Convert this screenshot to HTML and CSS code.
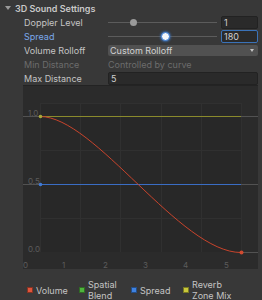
FILE: index.html
```html
<!DOCTYPE html>
<html>
<head>
<meta charset="utf-8">
<link rel="stylesheet" href="styles.css">
</head>
<body>
<div class="panel">
  <div class="header"><span class="fold"></span><span class="title">3D Sound Settings</span></div>
  <div class="row">
    <div class="label">Doppler Level</div>
    <div class="field slider-field">
      <div class="track"><span class="knob" style="left:25px"></span></div>
      <div class="num">1</div>
    </div>
  </div>
  <div class="row">
    <div class="label focus">Spread</div>
    <div class="field slider-field">
      <div class="track"><span class="knob active" style="left:56px"></span></div>
      <div class="num focused">180</div>
    </div>
  </div>
  <div class="row">
    <div class="label">Volume Rolloff</div>
    <div class="field"><div class="dropdown"><span>Custom Rolloff</span><span class="arrow"></span></div></div>
  </div>
  <div class="row">
    <div class="label disabled">Min Distance</div>
    <div class="field"><span class="disabled">Controlled by curve</span></div>
  </div>
  <div class="row">
    <div class="label">Max Distance</div>
    <div class="field"><div class="text-input">5</div></div>
  </div>
  <div class="graph">
    <svg width="235" height="184" viewBox="0 0 235 184">
      <rect x="0" y="0" width="235" height="184" fill="#2b2b2b"/>
      <rect x="0" y="0" width="235" height="1" fill="#232323"/>
      <rect x="17" y="18" width="201" height="149" fill="#282828"/>
      <g stroke="#303030" stroke-width="1">
        <line x1="17.5" y1="18" x2="17.5" y2="167"/>
        <line x1="57.5" y1="18" x2="57.5" y2="167"/>
        <line x1="97.5" y1="18" x2="97.5" y2="167"/>
        <line x1="138.5" y1="18" x2="138.5" y2="167"/>
        <line x1="178.5" y1="18" x2="178.5" y2="167"/>
        <line x1="218.5" y1="18" x2="218.5" y2="167"/>
        <line x1="17" y1="18.5" x2="218" y2="18.5"/>
        <line x1="17" y1="65.5" x2="218" y2="65.5"/>
        <line x1="17" y1="133.5" x2="218" y2="133.5"/>
      </g>
      <g stroke="#525252" stroke-width="1">
        <line x1="0" y1="31.5" x2="17" y2="31.5"/>
        <line x1="218" y1="31.5" x2="235" y2="31.5"/>
        <line x1="0" y1="99.5" x2="17" y2="99.5"/>
        <line x1="218" y1="99.5" x2="235" y2="99.5"/>
        <line x1="218" y1="167.5" x2="235" y2="167.5"/>
      </g>
      <line x1="17" y1="31.5" x2="218" y2="31.5" stroke="#8a8a2c" stroke-width="1"/>
      <line x1="17" y1="99.5" x2="218" y2="99.5" stroke="#3a6dc4" stroke-width="1"/>
      <path d="M17 31.5 C72 31.5 157 167.5 218 167.5" fill="none" stroke="#c8442c" stroke-width="1"/>
      <circle cx="17.5" cy="31.5" r="1.8" fill="#a8a83a"/>
      <circle cx="17.5" cy="99.5" r="1.8" fill="#3f7ad6"/>
      <circle cx="218.5" cy="167.5" r="2" fill="#d04a30"/>
      <g class="axis" fill="#5c5c5c" font-size="8">
        <text x="5" y="31">1.0</text>
        <text x="5" y="99">0.5</text>
        <text x="5" y="167">0.0</text>
        <text x="0" y="183">0</text>
        <text x="39" y="183">1</text>
        <text x="80" y="183">2</text>
        <text x="120" y="183">3</text>
        <text x="160" y="183">4</text>
        <text x="201" y="183">5</text>
      </g>
    </svg>
  </div>
  <div class="legend">
    <div class="item"><span class="sw red"></span><span>Volume</span></div>
    <div class="item"><span class="sw green"></span><span>Spatial<br>Blend</span></div>
    <div class="item"><span class="sw blue"></span><span>Spread</span></div>
    <div class="item"><span class="sw yellow"></span><span>Reverb<br>Zone Mix</span></div>
  </div>
</div>
</body>
</html>
```
FILE: styles.css
```css
html, body {
  margin: 0;
  padding: 0;
  background: #383838;
}
body {
  width: 262px;
  height: 300px;
  overflow: hidden;
  font-family: Inter, "Noto Sans", sans-serif;
  font-size: 9px;
  color: #c4c4c4;
}
.panel {
  padding-top: 1px;
}
.header {
  height: 14px;
  display: flex;
  align-items: center;
  padding-left: 5px;
}
.fold {
  width: 0;
  height: 0;
  border-left: 3px solid transparent;
  border-right: 3px solid transparent;
  border-top: 4px solid #9a9a9a;
  margin-right: 4px;
}
.title {
  font-weight: 600;
  color: #c8c8c8;
}
.row {
  height: 14px;
  display: flex;
  align-items: center;
  padding-left: 24px;
  padding-right: 4px;
}
.label {
  width: 84px;
  flex: none;
  white-space: nowrap;
}
.label.focus {
  color: #7aa8ec;
}
.disabled {
  color: #6c6c6c;
}
.field {
  flex: 1;
  display: flex;
  align-items: center;
  height: 12px;
}
.slider-field {
  gap: 4px;
}
.track {
  flex: 1;
  height: 1px;
  background: #5c5c5c;
  position: relative;
}
.knob {
  position: absolute;
  top: -3px;
  width: 7px;
  height: 7px;
  margin-left: -3.5px;
  border-radius: 50%;
  background: #9a9a9a;
}
.knob.active {
  top: -4px;
  width: 7px;
  height: 7px;
  margin-left: -3.5px;
  background: #f4f6fa;
  border: 1.5px solid #3c7fd8;
  box-shadow: 0 0 2px 1px rgba(60,127,216,0.6);
}
.num {
  width: 33px;
  height: 11px;
  flex: none;
  background: #2a2a2a;
  border: 1px solid #222;
  border-radius: 2px;
  padding-left: 2px;
  line-height: 11px;
  color: #d0d0d0;
}
.num.focused {
  border-color: #3a72b8;
}
.dropdown {
  flex: 1;
  height: 11px;
  background: #515151;
  border-radius: 2px;
  display: flex;
  align-items: center;
  justify-content: space-between;
  padding: 0 4px 0 2px;
  color: #d2d2d2;
  line-height: 11px;
}
.arrow {
  width: 0;
  height: 0;
  border-left: 2.5px solid transparent;
  border-right: 2.5px solid transparent;
  border-top: 3px solid #c4c4c4;
}
.text-input {
  flex: 1;
  height: 11px;
  background: #2a2a2a;
  border: 1px solid #222;
  border-radius: 2px;
  padding-left: 2px;
  line-height: 11px;
  color: #d0d0d0;
}
.graph {
  margin-left: 23px;
  width: 235px;
  height: 184px;
  line-height: 0;
}
.graph svg {
  display: block;
}
.axis {
  font-family: Inter, "Noto Sans", sans-serif;
}
.legend {
  display: flex;
  padding-left: 27px;
  margin-top: 9px;
  height: 24px;
  align-items: center;
  line-height: 11px;
}
.item {
  width: 52px;
  display: flex;
  align-items: center;
  gap: 3px;
}
.sw {
  width: 4px;
  height: 4px;
  flex: none;
  border: 0.5px solid rgba(0,0,0,0.4);
}
.red { background: #e0553b; }
.green { background: #4fb43d; }
.blue { background: #3f82e0; }
.yellow { background: #c9c83b; }
```
